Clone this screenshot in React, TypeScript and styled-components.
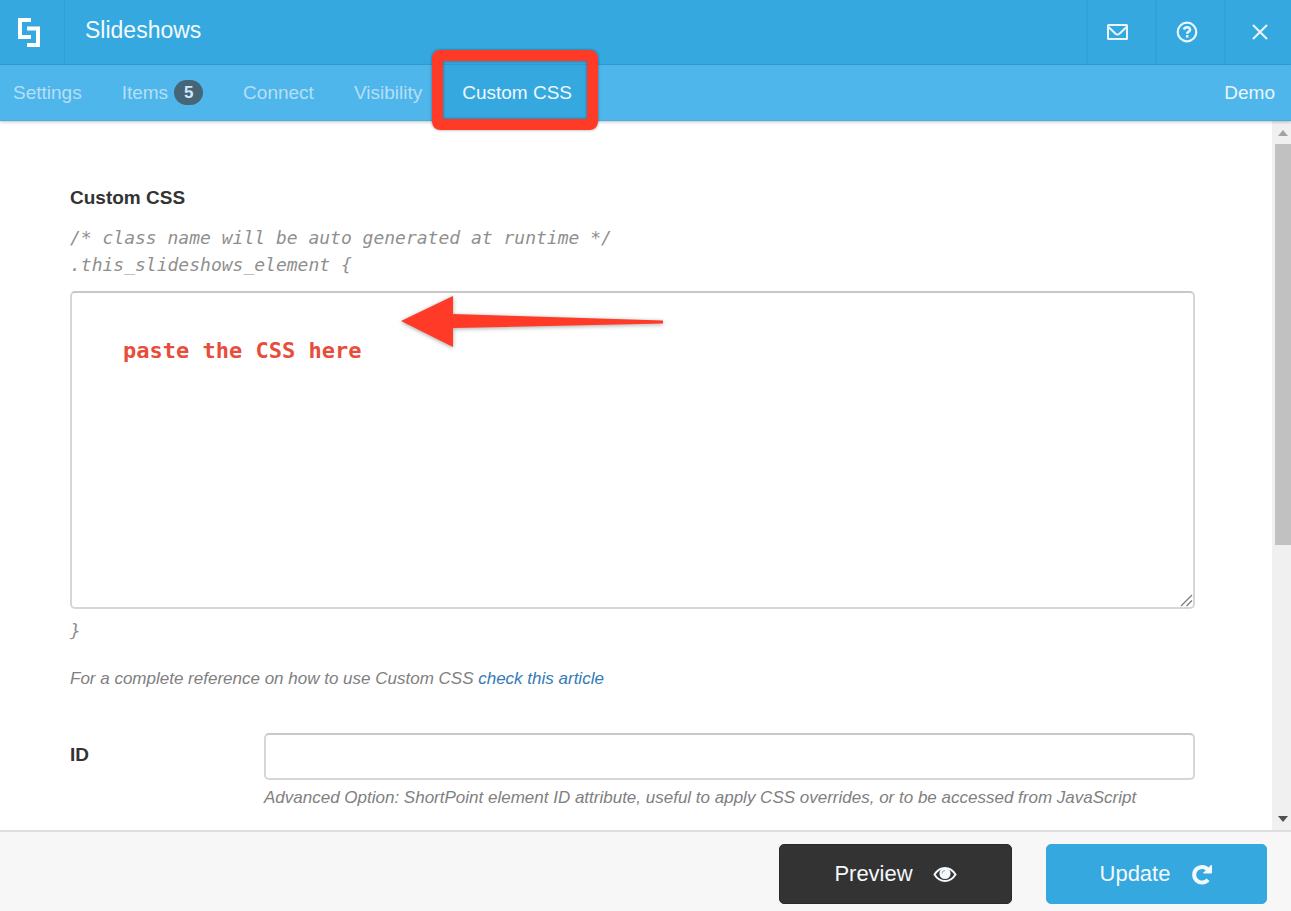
import React from 'react';
import styled, { createGlobalStyle, css } from 'styled-components';

const sans = '"Liberation Sans", Arial, Helvetica, sans-serif';
const mono = 'Consolas, "DejaVu Sans Mono", monospace';

const GlobalStyle = createGlobalStyle`
  *, *::before, *::after { box-sizing: border-box; }
  body { margin: 0; background: #fff; font-family: ${sans}; }
  button, input, textarea { font-family: inherit; }
`;

const Dialog = styled.div`
  display: flex;
  flex-direction: column;
  height: 100vh;
  overflow: hidden;
`;

const Header = styled.header`
  display: flex;
  flex: none;
  height: 65px;
  background: #36a8e0;
  border-bottom: 1px solid #30a0d8;
`;

const Logo = styled.a`
  display: flex;
  width: 65px;
  padding: 17px 0 0 17px;
  border-right: 1px solid #30a0d8;
`;

const Title = styled.h1`
  flex: 1;
  margin: 0;
  padding-left: 20px;
  font-size: 23px;
  font-weight: 400;
  line-height: 60px;
  color: #f2fafe;
`;

const HeaderButton = styled.button`
  display: flex;
  align-items: center;
  justify-content: center;
  width: 69px;
  padding: 0 8px 0 0;
  border: 0;
  border-left: 2px solid #32a2da;
  background: transparent;
  color: #eaf6fd;
  cursor: pointer;

  &:last-child { width: 67px; padding: 0 0 0 3px; }
`;

const TabBar = styled.nav`
  display: flex;
  flex: none;
  height: 56px;
  background: #4eb6ea;
  border-bottom: 1px solid #48aede;
  box-shadow: 0 1px 3px rgba(0, 0, 0, 0.25);
  position: relative;
`;

const Tab = styled.a<{ $active?: boolean }>`
  position: relative;
  display: flex;
  align-items: center;
  gap: 6px;
  padding: 0 20px;
  font-size: 19px;
  white-space: nowrap;
  text-decoration: none;
  color: #b5dff6;

  &:first-child { padding-left: 13px; }

  ${p => p.$active && css`
    background: #36a8e0;
    color: #eef8fd;
  `}
`;

const DemoLink = styled(Tab)`
  margin-left: auto;
  padding-right: 16px;
  color: #eaf6fd;
`;

const Badge = styled.span`
  width: 29px;
  border-radius: 13px;
  background: #466577;
  color: #cfe9f7;
  font-size: 17px;
  font-weight: 700;
  line-height: 25px;
  text-align: center;
`;

const Highlight = styled.span`
  position: absolute;
  inset: -15px -6px -10px -10px;
  border: 11px solid #ff3b28;
  border-radius: 8px;
  box-shadow: 0 0 3px rgba(0, 0, 0, 0.4), inset 0 0 3px rgba(0, 0, 0, 0.4);
  pointer-events: none;
`;

const Body = styled.div`
  display: flex;
  flex: 1;
  min-height: 0;
`;

const Form = styled.form`
  flex: 1;
  min-width: 0;
  padding: 65px 77px 0 70px;
  overflow: hidden;
`;

const Label = styled.label`
  display: block;
  font-size: 19px;
  font-weight: 700;
  line-height: 24px;
  color: #333;
`;

const Code = styled.pre`
  margin: 0;
  font-family: ${mono};
  font-size: 18px;
  font-style: italic;
  line-height: 27px;
  color: #8f8f8f;
`;

const Editor = styled.div`
  position: relative;
  margin: 13px 0 8px;
`;

const fieldFrame = css`
  display: block;
  width: 100%;
  border: 2px solid #d6d6d6;
  border-top-color: #c8c8c8;
  border-radius: 5px;
  background: #fff;
  outline: none;
`;

const CssArea = styled.textarea`
  ${fieldFrame}
  height: 318px;
  padding: 44px 51px;
  font-family: ${mono};
  font-size: 22px;
  font-weight: 700;
  line-height: 28px;
  color: #e84c3a;
  resize: vertical;

  &::-webkit-resizer { background: transparent; }
`;

const ResizeGrip = styled.svg`
  position: absolute;
  right: 2px;
  bottom: 2px;
  pointer-events: none;
`;

const Arrow = styled.svg`
  position: absolute;
  top: 1px;
  left: 330px;
  overflow: visible;
  filter: drop-shadow(0 1px 2px rgba(0, 0, 0, 0.35));
  pointer-events: none;
`;

const Hint = styled.p`
  margin: 0;
  font-size: 17px;
  font-style: italic;
  line-height: 20px;
  color: #808080;

  a { color: #337ab7; text-decoration: none; }
`;

const CodeBlock = styled.div`
  margin: 14px 0 25px;
`;

const FieldRow = styled.div`
  display: grid;
  grid-template-columns: 194px 1fr;
  margin-top: 44px;

  ${Label} { padding-top: 10px; }
`;

const TextField = styled.input`
  ${fieldFrame}
  height: 47px;
  margin-bottom: 8px;
  padding: 0 12px;
  font-size: 19px;
`;

const ScrollTrack = styled.div`
  display: flex;
  flex-direction: column;
  flex: none;
  align-items: center;
  width: 19px;
  padding: 9px 0 8px 3px;
  background: #f0f0f0;
`;

const ScrollThumb = styled.div`
  flex: 0 0 58%;
  width: 16px;
  margin: 8px 0 auto;
  background: #c1c1c1;
`;

const Footer = styled.footer`
  display: flex;
  flex: none;
  align-items: flex-start;
  justify-content: flex-end;
  gap: 34px;
  height: 81px;
  padding: 12px 24px 0;
  border-top: 2px solid #dedede;
  background: #f7f7f7;
`;

const ActionButton = styled.button<{ $primary?: boolean }>`
  display: flex;
  align-items: center;
  justify-content: center;
  gap: 20px;
  height: 60px;
  width: ${p => (p.$primary ? '221px' : '233px')};
  padding: 0;
  border: 1px solid ${p => (p.$primary ? '#36a8e0' : '#2b2b2b')};
  border-radius: 5px;
  background: ${p => (p.$primary ? '#36a8e0' : '#333')};
  color: #f2f8fb;
  font-size: 22px;
  cursor: pointer;
`;

const tabs = [
  { name: 'Settings' },
  { name: 'Items', count: 5 },
  { name: 'Connect' },
  { name: 'Visibility' },
  { name: 'Custom CSS', active: true },
];

export default function App() {
  return (
    <Dialog>
      <GlobalStyle />
      <Header>
        <Logo href="#" aria-label="ShortPoint">
          <svg width="24" height="31" viewBox="0 0 24 31" fill="none" stroke="#fff" strokeWidth="4">
            <path d="M14 3H3V20H14" />
            <path d="M10 11.500H21V28H10" />
          </svg>
        </Logo>
        <Title>Slideshows</Title>
        <HeaderButton aria-label="Messages">
          <svg width="21" height="16" viewBox="0 0 21 16" fill="none" stroke="currentColor" strokeWidth="2">
            <rect x="1" y="1" width="19" height="14" rx="0.500" />
            <path d="M1.500 3L8.500 9.700Q10.500 11.300 12.500 9.700L19.500 3" />
          </svg>
        </HeaderButton>
        <HeaderButton aria-label="Help">
          <svg width="22" height="22" viewBox="0 0 22 22" fill="none" stroke="currentColor">
            <circle cx="11" cy="11" r="9.300" strokeWidth="2.200" />
            <path d="M7.800 8.600Q8.800 6.300 11 6.300Q14 6.300 14 8.700Q14 10 12.400 10.800Q11.200 11.400 11.200 12.700" strokeWidth="2.600" />
            <path d="M9.900 15.300H12.500" strokeWidth="2.500" />
          </svg>
        </HeaderButton>
        <HeaderButton aria-label="Close">
          <svg width="16" height="16" viewBox="0 0 16 16" stroke="currentColor" strokeWidth="2">
            <path d="M1 1L15 15M15 1L1 15" />
          </svg>
        </HeaderButton>
      </Header>

      <TabBar>
        {tabs.map(tab => (
          <Tab key={tab.name} href="#" $active={tab.active}>
            {tab.name}
            {tab.count && <Badge>{tab.count}</Badge>}
            {tab.active && <Highlight />}
          </Tab>
        ))}
        <DemoLink href="#">Demo</DemoLink>
      </TabBar>

      <Body>
        <Form>
          <Label htmlFor="custom-css">Custom CSS</Label>
          <CodeBlock>
            <Code>{'/* class name will be auto generated at runtime */\n.this_slideshows_element {'}</Code>
            <Editor>
              <CssArea id="custom-css" defaultValue="paste the CSS here" spellCheck={false} />
              <ResizeGrip width="13" height="13" viewBox="0 0 13 13" stroke="#7d7d7d" strokeWidth="1.300" aria-hidden="true">
                <path d="M1 12L12 1M6.500 12L12 6.500" />
              </ResizeGrip>
              <Arrow width="264" height="56" viewBox="0 0 264 56" fill="#ff3b28" aria-hidden="true">
                <path d="M1 29L53 4V22L263 28.500V31.500L53 36V55Z" />
              </Arrow>
            </Editor>
            <Code>{'}'}</Code>
          </CodeBlock>
          <Hint>
            For a complete reference on how to use Custom CSS <a href="#">check this article</a>
          </Hint>
          <FieldRow>
            <Label htmlFor="element-id">ID</Label>
            <div>
              <TextField id="element-id" type="text" />
              <Hint>
                Advanced Option: ShortPoint element ID attribute, useful to apply CSS overrides, or to be
                accessed from JavaScript
              </Hint>
            </div>
          </FieldRow>
        </Form>
        <ScrollTrack aria-hidden="true">
          <svg width="10" height="6" viewBox="0 0 10 6" fill="#a3a3a3"><path d="M0 6L5 0L10 6Z" /></svg>
          <ScrollThumb />
          <svg width="10" height="6" viewBox="0 0 10 6" fill="#505050"><path d="M0 0L5 6L10 0Z" /></svg>
        </ScrollTrack>
      </Body>

      <Footer>
        <ActionButton type="button">
          Preview
          <svg width="24" height="24" viewBox="0 0 24 24" aria-hidden="true">
            <path d="M1.500 12.500Q5.500 6 12 6T22.500 12.500Q18.500 19 12 19T1.500 12.500Z" fill="none" stroke="currentColor" strokeWidth="2" />
            <circle cx="12" cy="11.500" r="5.600" fill="currentColor" />
            <path d="M9 11.500Q9 8.500 12 8.500" fill="none" stroke="#888" strokeWidth="0.800" />
          </svg>
        </ActionButton>
        <ActionButton type="button" $primary>
          Update
          <svg width="23" height="23" viewBox="0 0 23 23" aria-hidden="true">
            <path d="M18 6.800A7.800 7.800 0 1 0 18 16.700" fill="none" stroke="currentColor" strokeWidth="4" />
            <path d="M21.500 2V10H13.500Z" fill="currentColor" stroke="currentColor" strokeLinejoin="round" />
          </svg>
        </ActionButton>
      </Footer>
    </Dialog>
  );
}
